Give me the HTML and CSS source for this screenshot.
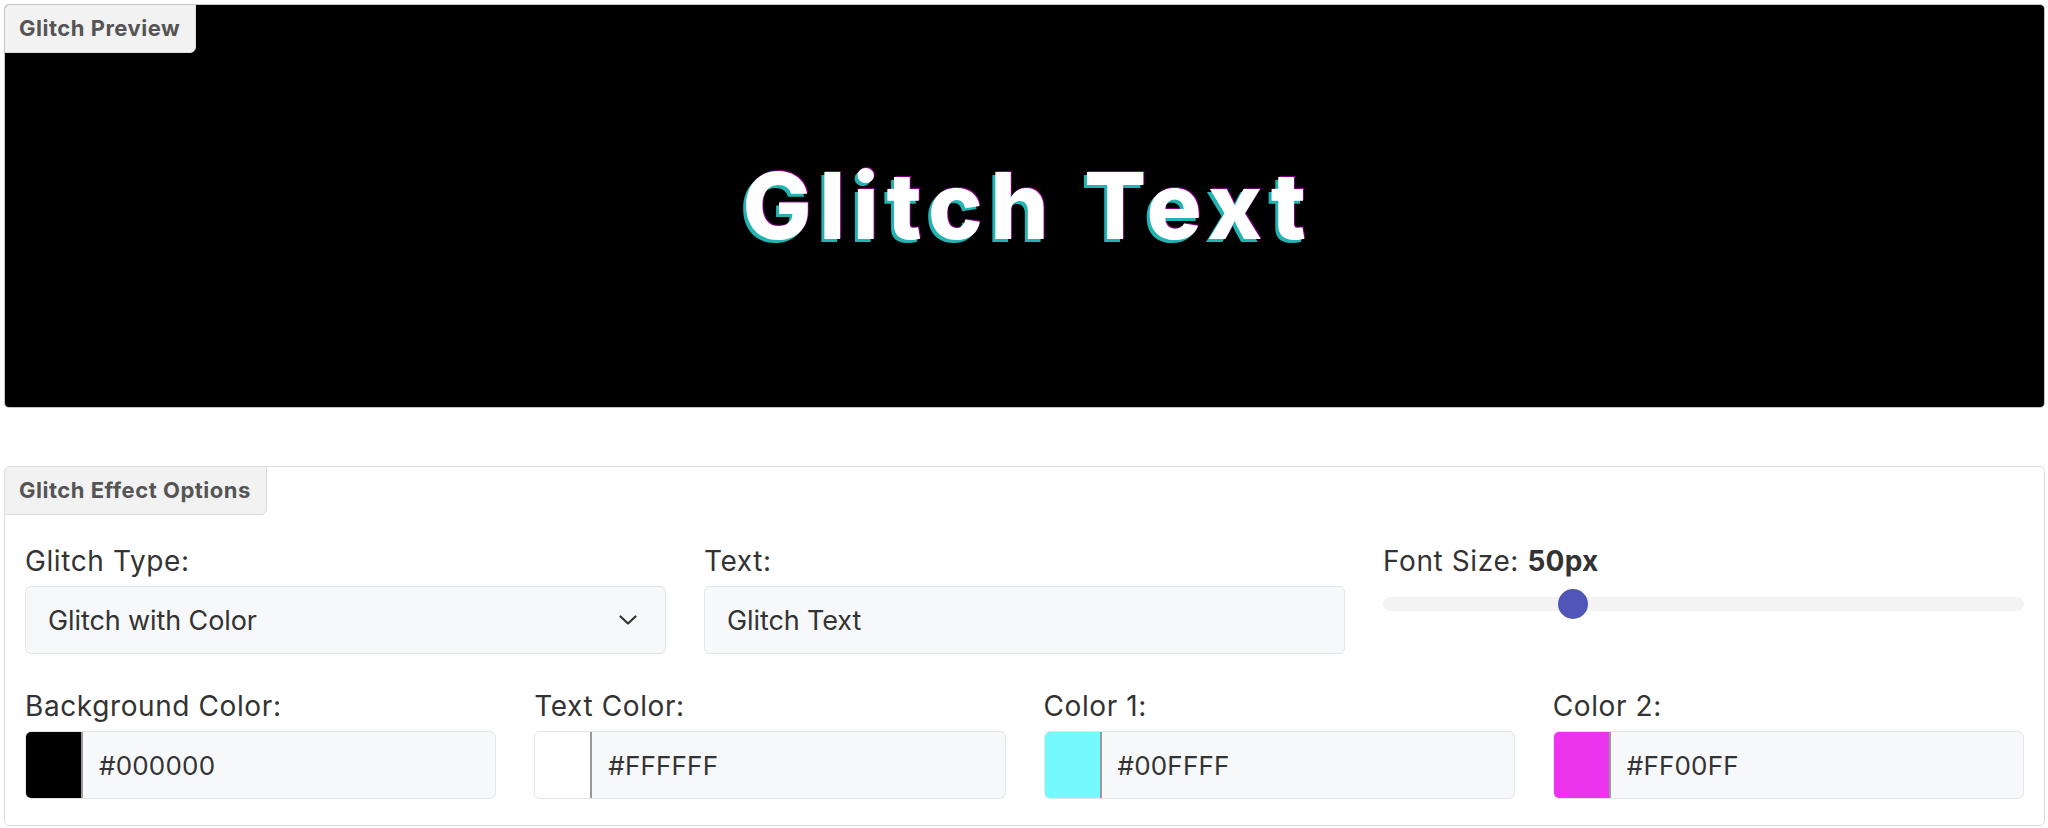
FILE: index.html
```html
<!DOCTYPE html>
<html lang="en">
<head>
<meta charset="utf-8">
<title>Glitch Text</title>
<link rel="stylesheet" href="styles.css">
</head>
<body>
  <section class="card preview-card">
    <div class="tab">Glitch Preview</div>
    <div class="stage">
      <div class="glitch">Glitch Text</div>
    </div>
  </section>

  <section class="card options-card">
    <div class="tab">Glitch Effect Options</div>
    <div class="options">
      <div class="row row-3">
        <div class="field">
          <label class="label" for="type">Glitch Type:</label>
          <div class="select-wrap">
            <select id="type" class="control select">
              <option>Glitch with Color</option>
            </select>
            <svg class="chevron" viewBox="0 0 18 10" width="18" height="10" aria-hidden="true">
              <path d="M1.5 1.5 L9 8.5 L16.5 1.5" fill="none" stroke="#333" stroke-width="2.2" stroke-linecap="round" stroke-linejoin="round"/>
            </svg>
          </div>
        </div>
        <div class="field">
          <label class="label" for="txt">Text:</label>
          <input id="txt" class="control" type="text" value="Glitch Text">
        </div>
        <div class="field">
          <label class="label" for="size">Font Size: <b>50px</b></label>
          <input id="size" class="range" type="range" min="10" max="150" value="50">
        </div>
      </div>
      <div class="row row-4">
        <div class="field">
          <label class="label">Background Color:</label>
          <div class="color-field">
            <span class="swatch swatch-black"></span>
            <input class="color-value" type="text" value="#000000">
          </div>
        </div>
        <div class="field">
          <label class="label">Text Color:</label>
          <div class="color-field">
            <span class="swatch swatch-white"></span>
            <input class="color-value" type="text" value="#FFFFFF">
          </div>
        </div>
        <div class="field">
          <label class="label">Color 1:</label>
          <div class="color-field">
            <span class="swatch swatch-cyan"></span>
            <input class="color-value" type="text" value="#00FFFF">
          </div>
        </div>
        <div class="field">
          <label class="label">Color 2:</label>
          <div class="color-field">
            <span class="swatch swatch-magenta"></span>
            <input class="color-value" type="text" value="#FF00FF">
          </div>
        </div>
      </div>
    </div>
  </section>
</body>
</html>
```

FILE: styles.css
```css
* { box-sizing: border-box; }

html, body { background: #ffffff; }

body {
  margin: 4px 3px 0 4px;
  font-family: Inter, "Noto Sans", "Liberation Sans", sans-serif;
  color: #333333;
}

.card {
  border: 1px solid #d6d6d6;
  border-radius: 5px;
  overflow: hidden;
  background: #ffffff;
}

.tab {
  display: inline-block;
  height: 49px;
  margin: -1px 0 0 -1px;
  padding: 0 15px 0 14px;
  background: #f2f2f2;
  border: 1px solid #dcdcdc;
  border-radius: 5px 0 6px 0;
  font-size: 22px;
  font-weight: 700;
  line-height: 47px;
  color: #555555;
  letter-spacing: 0.5px;
}

/* Preview */
.preview-card {
  position: relative;
  height: 404px;
  background: #000000;
  border-color: #c4c4c4;
}

.preview-card .tab {
  position: absolute;
  top: 0;
  left: 0;
  z-index: 1;
}

.stage {
  height: 100%;
  display: flex;
  align-items: center;
  justify-content: center;
  background: #000000;
}

.glitch {
  font-family: Inter, "Noto Sans", sans-serif;
  font-weight: 800;
  font-size: 92px;
  letter-spacing: 7.5px;
  color: #ffffff;
  line-height: 1;
  padding-left: 7px;
  text-shadow: -3px 3px rgba(40, 210, 210, 0.85), 1px -1px rgba(255, 0, 255, 0.5);
}

/* Options */
.options-card {
  margin-top: 58px;
  height: 360px;
  border-color: #dddddd;
}

.options {
  padding: 25px 20px 0 20px;
  display: flex;
  flex-direction: column;
  gap: 31px;
}

.row {
  display: grid;
  column-gap: 38px;
}

.row-3 { grid-template-columns: repeat(3, 1fr); }
.row-4 { grid-template-columns: repeat(4, 1fr); }

.field {
  display: flex;
  flex-direction: column;
  min-width: 0;
}

.label {
  font-size: 28px;
  line-height: 42px;
  margin-bottom: 4px;
  color: #333333;
  letter-spacing: 0.6px;
}

.label b { font-weight: 700; letter-spacing: 0.2px; }

.control {
  width: 100%;
  height: 68px;
  margin: 0;
  padding: 0 22px;
  background: #f7f8fa;
  border: 1px solid #e2e4e8;
  border-radius: 6px;
  font-family: inherit;
  font-size: 27px;
  color: #333333;
  letter-spacing: -0.1px;
  outline: none;
}

.select-wrap { position: relative; }

.select {
  appearance: none;
  -webkit-appearance: none;
}

.chevron {
  position: absolute;
  right: 29px;
  top: 29px;
  pointer-events: none;
}

/* Range */
.range {
  -webkit-appearance: none;
  appearance: none;
  width: 100%;
  height: 30px;
  margin: 3px 0 0 0;
  background: transparent;
}

.range::-webkit-slider-runnable-track {
  height: 14px;
  border-radius: 7px;
  background: #f3f3f3;
}

.range::-webkit-slider-thumb {
  -webkit-appearance: none;
  appearance: none;
  width: 30px;
  height: 30px;
  margin-top: -8px;
  border-radius: 50%;
  background: #5055b8;
  border: none;
}

/* Color fields */
.color-field {
  display: flex;
  height: 68px;
  background: #f7f8fa;
  border: 1px solid #e2e4e8;
  border-radius: 6px;
  overflow: hidden;
}

.swatch {
  flex: 0 0 57px;
  border-right: 2px solid #9a9a9a;
}

.swatch-black { background: #000000; }
.swatch-white { background: #ffffff; }
.swatch-cyan { background: #72fafd; }
.swatch-magenta { background: #ec34ef; }

.color-value {
  flex: 1;
  min-width: 0;
  border: none;
  background: transparent;
  padding: 0 16px;
  font-family: inherit;
  font-size: 26px;
  color: #333333;
  letter-spacing: 0.2px;
  outline: none;
}
```
